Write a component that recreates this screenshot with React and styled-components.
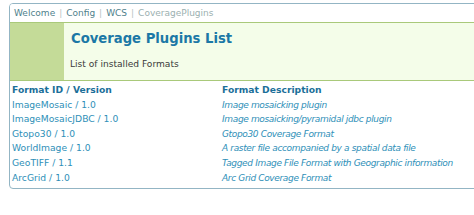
import React from "react";
import styled, { createGlobalStyle } from "styled-components";

const formats = [
  { id: "ImageMosaic / 1.0", desc: "Image mosaicking plugin" },
  { id: "ImageMosaicJDBC / 1.0", desc: "Image mosaicking/pyramidal jdbc plugin" },
  { id: "Gtopo30 / 1.0", desc: "Gtopo30 Coverage Format" },
  { id: "WorldImage / 1.0", desc: "A raster file accompanied by a spatial data file" },
  { id: "GeoTIFF / 1.1", desc: "Tagged Image File Format with Geographic information" },
  { id: "ArcGrid / 1.0", desc: "Arc Grid Coverage Format" },
];

const App = () => {
  return (
    <Page>
      <GlobalStyle />
      <Panel>
        <Crumbs>
          <Crumb>Welcome</Crumb>
          <Sep>|</Sep>
          <Crumb>Config</Crumb>
          <Sep>|</Sep>
          <Crumb>WCS</Crumb>
          <Sep>|</Sep>
          <Crumb current>CoveragePlugins</Crumb>
        </Crumbs>
        <Header>
          <SideBlock />
          <HeaderText>
            <Title>Coverage Plugins List</Title>
            <Subtitle>List of installed Formats</Subtitle>
          </HeaderText>
        </Header>
        <Table>
          <HeadCell>Format ID / Version</HeadCell>
          <HeadCell>Format Description</HeadCell>
          {formats.map((f) => (
            <React.Fragment key={f.id}>
              <Cell>{f.id}</Cell>
              <Cell italic>{f.desc}</Cell>
            </React.Fragment>
          ))}
        </Table>
      </Panel>
    </Page>
  );
};
export default App;

const GlobalStyle = createGlobalStyle`
  body {
    margin: 0;
    background: #ffffff;
    font-family: "DejaVu Sans", Verdana, sans-serif;
    overflow: hidden;
  }
`;

const Page = styled.div`
  padding: 3px 0 0 9px;
  width: 474px;
  box-sizing: border-box;
`;

const Panel = styled.div`
  width: 480px;
  border: 1px solid #93b5c4;
  border-radius: 4px;
  overflow: hidden;
`;

const Crumbs = styled.div`
  display: flex;
  align-items: center;
  gap: 4px;
  height: 18px;
  padding-left: 4px;
  font-size: 9px;
  background: #ffffff;
  border-bottom: 1px solid #a9c97a;
`;

const Crumb = styled.span`
  color: ${(p) => (p.current ? "#9bb0b0" : "#4f7f8c")};
`;

const Sep = styled.span`
  color: #b8c4c4;
`;

const Header = styled.div`
  display: flex;
  height: 57px;
  background: #f4fde9;
  border-bottom: 1px solid #a9c97a;
`;

const SideBlock = styled.div`
  width: 54px;
  background: #c4db98;
`;

const HeaderText = styled.div`
  display: flex;
  flex-direction: column;
  padding: 8px 0 0 6px;
`;

const Title = styled.h1`
  margin: 0 0 0 1px;
  font-size: 13.2px;
  font-weight: bold;
  color: #1b78a6;
`;

const Subtitle = styled.p`
  margin: 13px 0 0;
  font-size: 9.1px;
  color: #3a3a3a;
`;

const Table = styled.div`
  display: grid;
  grid-template-columns: 210px 1fr;
  grid-auto-rows: 14.6px;
  padding: 2px 0 3px 2px;
  font-size: 9.2px;
`;

const HeadCell = styled.div`
  font-weight: bold;
  color: #1b6f99;
  white-space: nowrap;
  line-height: 14.6px;
`;

const Cell = styled.div`
  color: #2e8fb8;
  font-style: ${(p) => (p.italic ? "italic" : "normal")};
  font-size: ${(p) => (p.italic ? "9px" : "9.2px")};
  letter-spacing: ${(p) => (p.italic ? "-0.35px" : "normal")};
  white-space: nowrap;
  line-height: 14.6px;
`;
